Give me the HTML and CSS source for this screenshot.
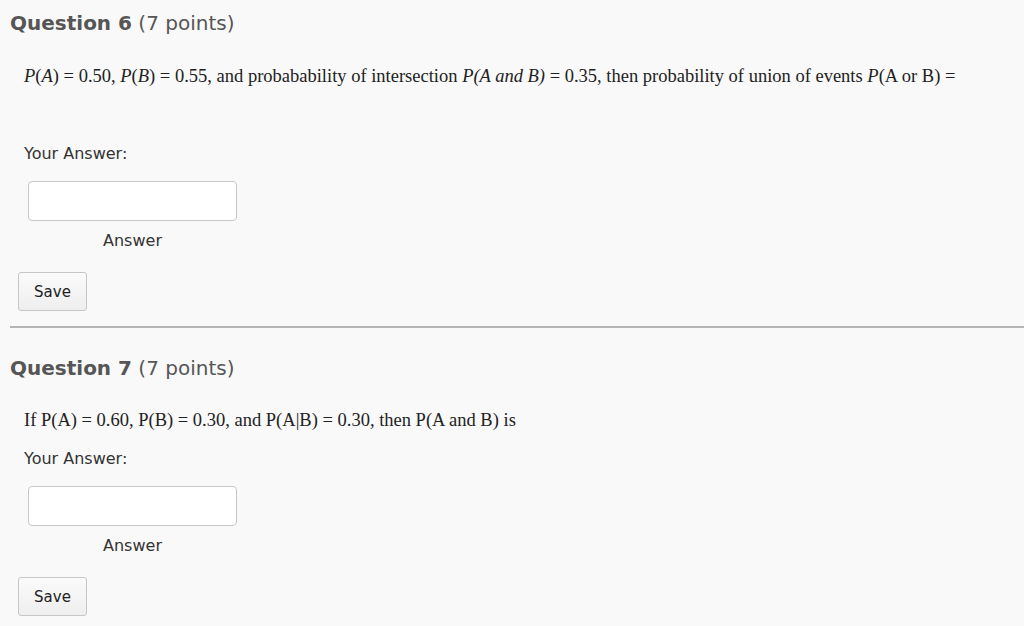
FILE: index.html
```html
<!DOCTYPE html>
<html>
<head>
<meta charset="utf-8">
<link rel="stylesheet" href="styles.css">
</head>
<body>
<div class="page">
  <section class="question">
    <h2 class="q-title"><strong>Question 6</strong> (7 points)</h2>
    <p class="q-text"><i>P</i>(<i>A</i>) = 0.50, <i>P</i>(<i>B</i>) = 0.55, and probabability of intersection <i>P(A and B)</i> = 0.35, then probability of union of events <i>P</i>(A or B) =</p>
    <div class="answer-label first">Your Answer:</div>
    <div class="answer-field">
      <input class="answer-input" type="text">
      <div class="answer-caption">Answer</div>
    </div>
    <button class="save-btn">Save</button>
  </section>
  <hr class="divider">
  <section class="question second">
    <h2 class="q-title"><strong>Question 7</strong> (7 points)</h2>
    <p class="q-text">If P(A) = 0.60, P(B) = 0.30, and P(A|B) = 0.30, then P(A and B) is</p>
    <div class="answer-label">Your Answer:</div>
    <div class="answer-field">
      <input class="answer-input" type="text">
      <div class="answer-caption">Answer</div>
    </div>
    <button class="save-btn">Save</button>
  </section>
</div>
</body>
</html>
```
FILE: styles.css
```css
html, body {
  margin: 0;
  padding: 0;
  background: #f9f9f9;
}
body {
  font-family: "DejaVu Sans", Verdana, sans-serif;
  color: #333;
}
.page {
  padding: 9px 0 0 10px;
}
.q-title {
  margin: 0;
  font-size: 20px;
  font-weight: normal;
  color: #565656;
  line-height: 28px;
}
.q-title strong {
  font-weight: bold;
}
.q-text {
  margin: 0;
  padding: 28px 0 0 14px;
  font-family: "Liberation Serif", "Times New Roman", serif;
  font-size: 18.5px;
  line-height: 22px;
  color: #222;
}
.answer-label {
  padding: 18px 0 0 14px;
  font-size: 16px;
  line-height: 20px;
  color: #333;
}
.answer-label.first {
  padding-top: 57px;
}
.answer-field {
  display: flex;
  flex-direction: column;
  align-items: center;
  width: 209px;
  margin: 17px 0 0 18px;
}
.answer-input {
  box-sizing: border-box;
  width: 209px;
  height: 40px;
  margin: 0;
  border: 1px solid #c8c8c8;
  border-radius: 4px;
  background: #fff;
}
.answer-caption {
  margin-top: 10px;
  font-size: 16px;
  line-height: 20px;
  color: #333;
}
.save-btn {
  display: block;
  box-sizing: border-box;
  width: 69px;
  height: 39px;
  margin: 21px 0 0 8px;
  padding: 0;
  border: 1px solid #c6c6c6;
  border-radius: 3px;
  background: linear-gradient(#fbfbfb, #eeeeee);
  font-family: "DejaVu Sans", Verdana, sans-serif;
  font-size: 15px;
  color: #222;
}
.divider {
  margin: 15px 0 0 0;
  border: 0;
  border-top: 2px solid #b5b5b5;
  height: 0;
}
.second .q-title {
  margin-top: 26px;
}
.second .q-text {
  padding-top: 27px;
}
```
